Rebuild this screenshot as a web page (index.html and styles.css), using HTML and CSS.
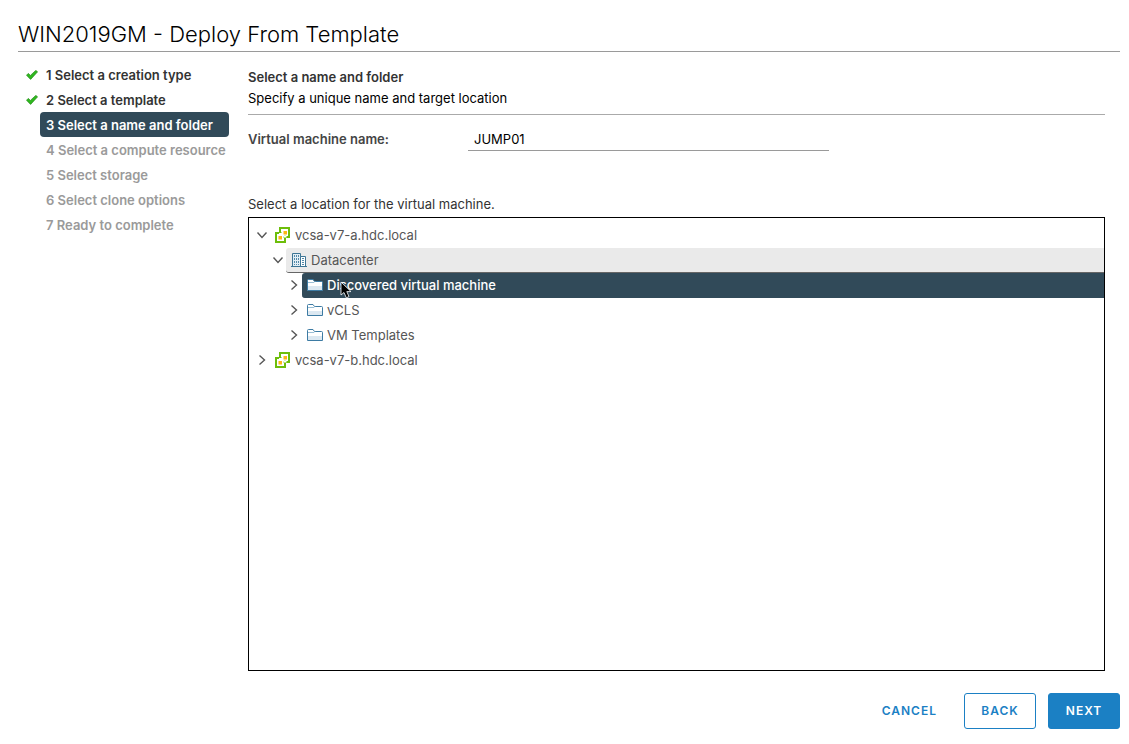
FILE: index.html
```html
<!DOCTYPE html>
<html lang="en">
<head>
    <meta charset="utf-8">
    <title>WIN2019GM - Deploy From Template</title>
    <link rel="stylesheet" href="styles.css">
</head>
<body>
    <svg class="symbols" width="0" height="0">
        <symbol id="check" viewBox="0 0 12 10">
            <path d="M0.5 5.2 L2.3 3.4 L4.4 5.4 L9.8 0.4 L11.6 1.8 L4.6 9.4 Z" fill="#2fb81f" stroke="#1f8a12" stroke-width="0.7"/>
        </symbol>
        <symbol id="chevron" viewBox="0 0 12 12">
            <path d="M3.5 1.5 L8.5 6 L3.5 10.5" fill="none" stroke="#565656" stroke-width="1.4"/>
        </symbol>
        <symbol id="vcenter" viewBox="0 0 16 16">
            <path d="M5 5.5 V1 H14 V10 H10 V15 H1 V5.5 Z" fill="#fff"/>
            <path d="M5 7.5 V1 H14 V10 H8.5 M6.5 6 H1 V15 H10 V8.5" fill="none" stroke="#6dbe0a" stroke-width="2"/>
            <path d="M4 6h3v2h-3zM8.5 8.5h3v2h-3z" fill="#fff"/>
            <path d="M8.5 4h3.5v3.5h-3.5zM3.5 9h3.5v3.5h-3.5z" fill="#fdb515"/>
        </symbol>
        <symbol id="datacenter" viewBox="0 0 16 16">
            <path d="M1.5 14.5 V1.5 H9.5 V14.5 Z" fill="#e3eef5" stroke="#3d7595"/>
            <path d="M9.5 14.5 V4.5 H14.5 V14.5 Z" fill="#fff" stroke="#3d7595"/>
            <path d="M0 14.5 H16" stroke="#3d7595"/>
            <path d="M3.5 3v10M5.5 3v10M7.5 3v10" stroke="#5489a8" stroke-dasharray="2 1"/>
            <path d="M12 6v7" stroke="#5489a8" stroke-width="2" stroke-dasharray="1 1"/>
        </symbol>
        <symbol id="folder" viewBox="0 0 16 14">
            <path d="M0.5 12.5 V2.5 Q0.5 1.5 1.5 1.5 H6 L7.5 3.5 H14.5 Q15.5 3.5 15.5 4.5 V12.5 Z" fill="#fff" stroke="#3d7ba3"/>
            <path d="M1 8H15V12H1z" fill="#dce8f1"/>
            <path d="M1 4.5H7L8 3.5" fill="none" stroke="#9bbfd6"/>
        </symbol>
    </svg>

    <header class="wizard-header">
        <h1>WIN2019GM - Deploy From Template</h1>
    </header>

    <div class="wizard-body">
        <nav class="steps" aria-label="Wizard steps">
            <ol>
                <li class="done"><svg class="check"><use href="#check"/></svg><button type="button">1 Select a creation type</button></li>
                <li class="done"><svg class="check"><use href="#check"/></svg><button type="button">2 Select a template</button></li>
                <li class="current"><button type="button" aria-current="step">3 Select a name and folder</button></li>
                <li><button type="button" disabled>4 Select a compute resource</button></li>
                <li><button type="button" disabled>5 Select storage</button></li>
                <li><button type="button" disabled>6 Select clone options</button></li>
                <li><button type="button" disabled>7 Ready to complete</button></li>
            </ol>
        </nav>

        <main class="page">
            <div class="page-header">
                <h2>Select a name and folder</h2>
                <p>Specify a unique name and target location</p>
            </div>
            <div class="field">
                <label for="vmName">Virtual machine name:</label>
                <input id="vmName" type="text" value="JUMP01">
            </div>
            <p class="location-label" id="locationLabel">Select a location for the virtual machine.</p>
            <div class="tree" role="tree" aria-labelledby="locationLabel">
                <ul>
                    <li>
                        <div class="row">
                            <button type="button" class="toggle open" aria-label="Collapse"><svg><use href="#chevron"/></svg></button>
                            <span class="node"><svg class="icon"><use href="#vcenter"/></svg>vcsa-v7-a.hdc.local</span>
                        </div>
                        <ul>
                            <li>
                                <div class="row">
                                    <button type="button" class="toggle open" aria-label="Collapse"><svg><use href="#chevron"/></svg></button>
                                    <span class="node hover"><svg class="icon"><use href="#datacenter"/></svg>Datacenter</span>
                                </div>
                                <ul>
                                    <li class="row">
                                        <button type="button" class="toggle" aria-label="Expand"><svg><use href="#chevron"/></svg></button>
                                        <span class="node selected"><svg class="icon"><use href="#folder"/></svg>Discovered virtual machine
                                            <svg class="pointer" viewBox="0 0 12 18"><path d="M1 1 V14 L4 11.5 L6.3 16.8 L9 15.6 L6.8 10.6 H11 Z" fill="#000" stroke="#fff" stroke-width="0.8"/></svg>
                                        </span>
                                    </li>
                                    <li class="row">
                                        <button type="button" class="toggle" aria-label="Expand"><svg><use href="#chevron"/></svg></button>
                                        <span class="node"><svg class="icon"><use href="#folder"/></svg>vCLS</span>
                                    </li>
                                    <li class="row">
                                        <button type="button" class="toggle" aria-label="Expand"><svg><use href="#chevron"/></svg></button>
                                        <span class="node"><svg class="icon"><use href="#folder"/></svg>VM Templates</span>
                                    </li>
                                </ul>
                            </li>
                        </ul>
                    </li>
                    <li class="row">
                        <button type="button" class="toggle" aria-label="Expand"><svg><use href="#chevron"/></svg></button>
                        <span class="node"><svg class="icon"><use href="#vcenter"/></svg>vcsa-v7-b.hdc.local</span>
                    </li>
                </ul>
            </div>
        </main>
    </div>

    <footer class="wizard-footer">
        <button type="button" class="btn btn-link">CANCEL</button>
        <button type="button" class="btn">BACK</button>
        <button type="button" class="btn btn-primary">NEXT</button>
    </footer>
</body>
</html>
```
FILE: styles.css
```css
* {
    box-sizing: border-box;
}

body {
    display: flex;
    flex-direction: column;
    min-height: 100vh;
    margin: 0;
    padding: 16px 9px 15px 18px;
    background: #fff;
    color: #000;
    font-family: Metropolis, Inter, "Open Sans", sans-serif;
    font-size: 13px;
    line-height: 20px;
}

h1, h2, p, ul, ol {
    margin: 0;
    padding: 0;
}

ul, ol {
    list-style: none;
}

button, input {
    font: inherit;
    color: inherit;
}

.symbols {
    position: absolute;
}

.wizard-header {
    border-bottom: 1px solid #9a9a9a;
}

.wizard-header h1 {
    height: 35px;
    font-size: 22px;
    font-weight: 300;
    line-height: 36px;
}

.wizard-body {
    display: flex;
    flex: 1;
}

.steps {
    flex: none;
    width: 230px;
    padding-top: 10px;
}

.steps li {
    display: flex;
    align-items: center;
    height: 25px;
    padding-left: 22px;
}

.steps li.done {
    padding-left: 8px;
}

.steps button {
    height: 25px;
    padding: 0 6px;
    border: none;
    border-radius: 4px;
    background: none;
    color: #9a9a9a;
    font-weight: 600;
    white-space: nowrap;
}

.steps .done button {
    color: #333;
}

.steps .current button {
    padding-right: 16px;
    background: #314a59;
    color: #fff;
}

.check {
    width: 12px;
    height: 10px;
    margin-right: 2px;
}

.page {
    display: flex;
    flex: 1;
    flex-direction: column;
    min-width: 0;
    margin-right: 15px;
}

.page-header {
    padding: 15px 0 5px;
    border-bottom: 1px solid #aaa;
    line-height: 21px;
}

.page-header h2 {
    color: #333;
    font-size: 13px;
    font-weight: 600;
}

.field {
    display: flex;
    align-items: center;
    padding-top: 12px;
}

.field label {
    width: 220px;
    color: #454545;
    font-weight: 600;
}

.field input {
    width: 361px;
    height: 24px;
    padding: 0 6px;
    border: none;
    border-bottom: 1px solid #9a9a9a;
    background: none;
    outline: none;
}

.location-label {
    margin-top: 43px;
    color: #333;
}

.tree {
    flex: 1;
    margin-top: 3px;
    padding: 5px 0 5px 5px;
    border: 1px solid #000;
    color: #565656;
}

.tree ul ul {
    padding-left: 16px;
}

.row {
    display: flex;
    height: 25px;
}

.toggle {
    display: flex;
    align-items: center;
    justify-content: center;
    width: 16px;
    padding: 0 0 1px;
    border: none;
    background: none;
}

.toggle svg {
    width: 12px;
    height: 12px;
}

.toggle.open svg {
    transform: rotate(90deg);
}

.node {
    position: relative;
    display: flex;
    flex: 1;
    gap: 4px;
    align-items: center;
    padding-left: 5px;
    border-bottom: 1px solid transparent;
    border-radius: 3px 0 0 3px;
}

.node.hover {
    border-bottom-color: #666;
    background: #eaeaea;
}

.node.selected {
    border-bottom-color: #314a59;
    background: #314a59;
    color: #fff;
    font-weight: 500;
}

.icon {
    width: 16px;
    height: 16px;
}

/* mouse pointer over the selected folder */
.pointer {
    position: absolute;
    left: 38px;
    top: 8px;
    width: 12px;
    height: 18px;
}

.wizard-footer {
    display: flex;
    justify-content: flex-end;
    gap: 12px;
    padding-top: 22px;
}

.btn {
    min-width: 72px;
    height: 36px;
    padding: 0 14px;
    border: 1px solid #1b80c4;
    border-radius: 3px;
    background: #fff;
    color: #1b80c4;
    font-size: 12px;
    font-weight: 600;
    letter-spacing: 1px;
}

.btn-link {
    border-color: transparent;
}

.btn-primary {
    background: #1b80c4;
    color: #fff;
}
```
